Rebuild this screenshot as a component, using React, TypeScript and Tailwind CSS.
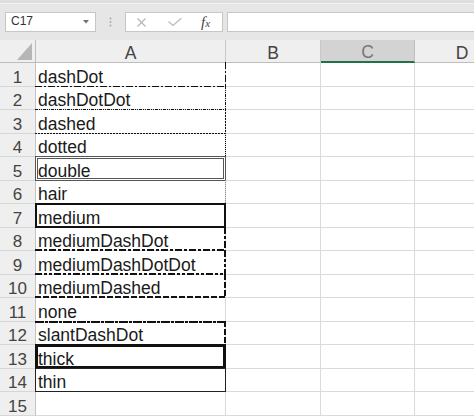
import React from 'react';

type Line =
    | 'dashDot'
    | 'dashDotDot'
    | 'dashed'
    | 'dotted'
    | 'hair'
    | 'mediumDashDot'
    | 'mediumDashDotDot'
    | 'mediumDashed'
    | 'slantDashDot';

type Box = 'double' | 'medium' | 'thick' | 'thin';

// horizontal patterns (bottom / top edges)
const hLine: Record<Line, string> = {
    dashDot: 'h-px bg-[repeating-linear-gradient(90deg,#111_0_7px,transparent_7px_9px,#111_9px_11px,transparent_11px_13px)]',
    dashDotDot: 'h-px bg-[repeating-linear-gradient(90deg,#111_0_3px,transparent_3px_4px,#111_4px_5px,transparent_5px_6px,#111_6px_7px,transparent_7px_8px)]',
    dashed: 'h-px bg-[repeating-linear-gradient(90deg,#111_0_2px,transparent_2px_3px)]',
    dotted: 'h-px bg-[repeating-linear-gradient(90deg,#111_0_1px,transparent_1px_2px)]',
    hair: 'h-px bg-[repeating-linear-gradient(90deg,#888_0_1px,transparent_1px_2px)]',
    mediumDashDot: 'h-[2px] bg-[repeating-linear-gradient(90deg,#111_0_7px,transparent_7px_9px,#111_9px_12px,transparent_12px_14px)]',
    mediumDashDotDot: 'h-[2px] bg-[repeating-linear-gradient(90deg,#111_0_7px,transparent_7px_9px,#111_9px_12px,transparent_12px_14px,#111_14px_17px,transparent_17px_19px)]',
    mediumDashed: 'h-[2px] bg-[repeating-linear-gradient(90deg,#111_0_6px,transparent_6px_8px)]',
    slantDashDot: 'h-[2px] bg-[repeating-linear-gradient(90deg,#111_0_9px,transparent_9px_10px,#111_10px_13px,transparent_13px_14px)]',
};

// vertical patterns (right edge)
const vLine: Record<Line, string> = {
    dashDot: 'w-px bg-[repeating-linear-gradient(180deg,#111_0_7px,transparent_7px_9px,#111_9px_11px,transparent_11px_13px)]',
    dashDotDot: 'w-px bg-[repeating-linear-gradient(180deg,#111_0_3px,transparent_3px_4px,#111_4px_5px,transparent_5px_6px,#111_6px_7px,transparent_7px_8px)]',
    dashed: 'w-px bg-[repeating-linear-gradient(180deg,#111_0_2px,transparent_2px_3px)]',
    dotted: 'w-px bg-[repeating-linear-gradient(180deg,#111_0_1px,transparent_1px_2px)]',
    hair: 'w-px bg-[repeating-linear-gradient(180deg,#888_0_1px,transparent_1px_2px)]',
    mediumDashDot: 'w-[2px] bg-[repeating-linear-gradient(180deg,#111_0_7px,transparent_7px_9px,#111_9px_12px,transparent_12px_14px)]',
    mediumDashDotDot: 'w-[2px] bg-[repeating-linear-gradient(180deg,#111_0_7px,transparent_7px_9px,#111_9px_12px,transparent_12px_14px,#111_14px_17px,transparent_17px_19px)]',
    mediumDashed: 'w-[2px] bg-[repeating-linear-gradient(180deg,#111_0_6px,transparent_6px_8px)]',
    slantDashDot: 'w-[2px] bg-[repeating-linear-gradient(180deg,#111_0_6px,transparent_6px_8px)]',
};

const boxClass: Record<Box, string> = {
    double: 'border-[3px] border-double border-[#555]',
    medium: 'border-2 border-[#111]',
    thick: 'border-[3px] border-[#111]',
    thin: 'border border-[#222]',
};

type Row = { label: string; bottom?: Line; right?: Line; top?: Line; box?: Box };

const rows: Row[] = [
    { label: 'dashDot', bottom: 'dashDot', right: 'dashDot' },
    { label: 'dashDotDot', bottom: 'dashDotDot', right: 'dashDotDot' },
    { label: 'dashed', bottom: 'dashed', right: 'dashed' },
    { label: 'dotted', bottom: 'dotted', right: 'dotted' },
    { label: 'double', box: 'double' },
    { label: 'hair', right: 'hair' },
    { label: 'medium', box: 'medium' },
    { label: 'mediumDashDot', bottom: 'mediumDashDot', right: 'mediumDashDot' },
    { label: 'mediumDashDotDot', bottom: 'mediumDashDotDot', right: 'mediumDashDotDot' },
    { label: 'mediumDashed', bottom: 'mediumDashed', right: 'mediumDashed' },
    { label: 'none' },
    { label: 'slantDashDot', top: 'slantDashDot', right: 'slantDashDot' },
    { label: 'thick', box: 'thick' },
    { label: 'thin', box: 'thin' },
    { label: '' },
];

function Toolbar() {
    return (
        <div className="h-[40px] bg-[#e6e6e6] overflow-hidden">
            <div className="h-[4px] bg-[#dedede] border-b border-[#f2f2f2]" />
            <div className="flex mt-[8px] h-[20px]">
                {/* Name box */}
                <div className="ml-[5px] w-[91px] shrink-0 bg-white border border-[#c6c6c6] flex items-center justify-between pl-[5px] pr-[6px] text-[12px] text-[#333]">
                    <span>C17</span>
                    <svg width="6" height="4" viewBox="0 0 6 4">
                        <path d="M0 0h6L3 3.5z" fill="#707070" />
                    </svg>
                </div>
                <div className="w-[29px] shrink-0 flex items-center justify-center">
                    <svg width="3" height="10" viewBox="0 0 3 10">
                        <circle cx="1.5" cy="1.5" r="1" fill="#aaa" />
                        <circle cx="1.5" cy="5" r="1" fill="#aaa" />
                        <circle cx="1.5" cy="8.5" r="1" fill="#aaa" />
                    </svg>
                </div>
                {/* Cancel / Enter / Insert function */}
                <div className="w-[98px] shrink-0 bg-white border border-[#c6c6c6] flex items-center pl-[11px]">
                    <svg width="9" height="9" viewBox="0 0 9 9">
                        <path d="M0.5 0.5l8 8M8.5 0.5l-8 8" stroke="#b4b4b4" strokeWidth="1.1" fill="none" />
                    </svg>
                    <svg className="ml-[22px]" width="14" height="8" viewBox="0 0 14 8">
                        <path d="M0.5 3.5l4.5 4 8.5-7.5" stroke="#c0c0c0" strokeWidth="1.4" fill="none" />
                    </svg>
                    <span className="ml-[19px] font-['Liberation_Serif',serif] italic text-[15px] leading-none text-[#444]">
                        f<span className="text-[11px]">x</span>
                    </span>
                </div>
                {/* Formula input */}
                <div className="ml-[4px] w-[260px] shrink-0 bg-white border border-[#c6c6c6]" />
            </div>
        </div>
    );
}

function HeaderRow() {
    return (
        <div className="flex h-[23px] bg-[#efefef] text-[#444]">
            <div className="w-[36px] shrink-0 border-r border-b border-[#bdbdbd] flex items-end justify-end pr-[2px] pb-[2px]">
                <svg width="16" height="17" viewBox="0 0 16 17">
                    <path d="M15 0V17H0z" fill="#b6b6b6" />
                </svg>
            </div>
            <div className="w-[190px] shrink-0 border-r border-r-[#c8c8c8] border-b border-b-[#bdbdbd] flex items-end justify-center">A</div>
            <div className="w-[95px] shrink-0 border-r border-r-[#c8c8c8] border-b border-b-[#bdbdbd] flex items-end justify-center">B</div>
            <div className="w-[94px] shrink-0 bg-[#d3d3d3] border-r border-r-[#bfbfbf] border-b-2 border-b-[#217346] flex items-end justify-center text-[#777]">
                C
            </div>
            <div className="w-[94px] shrink-0 border-b border-[#bdbdbd] flex items-end justify-center">D</div>
        </div>
    );
}

function SheetRow({ row, index }: { row: Row; index: number }) {
    return (
        <div className={`flex ${index % 2 === 0 ? 'h-[24px]' : 'h-[23px]'}`}>
            <div className="w-[36px] shrink-0 bg-[#efefef] border-r border-r-[#c4c4c4] border-b border-b-[#d6d6d6] flex items-end justify-center text-[17px] text-[#444]">
                {index + 1}
            </div>
            <div className="relative w-[190px] shrink-0 border-r border-b border-[#dadada] flex items-end pl-[2px] text-[#1a1a1a]">
                {row.label}
                {row.bottom && <div className={`absolute -bottom-px -left-px -right-px ${hLine[row.bottom]}`} />}
                {row.top && <div className={`absolute -top-px -left-px -right-px ${hLine[row.top]}`} />}
                {row.right && <div className={`absolute -top-px -bottom-px -right-px ${vLine[row.right]}`} />}
                {row.box && <div className={`absolute -top-px -bottom-px -left-px -right-px ${boxClass[row.box]}`} />}
            </div>
            <div className="w-[95px] shrink-0 border-r border-b border-[#dadada]" />
            <div className="w-[94px] shrink-0 border-r border-b border-[#dadada]" />
            <div className="w-[94px] shrink-0 border-b border-[#dadada]" />
        </div>
    );
}

export default function App() {
    return (
        <div className="w-[474px] h-[418px] overflow-hidden bg-white font-['Liberation_Sans',sans-serif] text-[17.5px] leading-[17.5px]">
            <Toolbar />
            <HeaderRow />
            {rows.map((row, i) => (
                <SheetRow key={i} row={row} index={i} />
            ))}
        </div>
    );
}
